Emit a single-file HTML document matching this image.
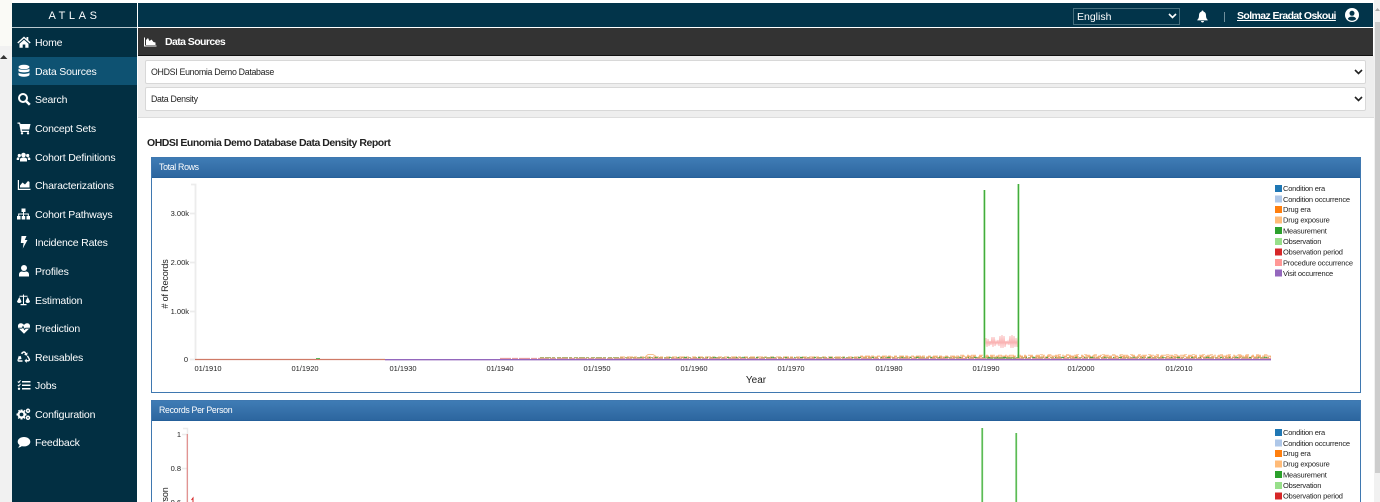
<!DOCTYPE html>
<html lang="en"><head><meta charset="utf-8"><title>ATLAS Data Sources</title>
<style>
html,body{margin:0;padding:0;width:1380px;height:502px;overflow:hidden;background:#fff;font-family:"Liberation Sans",sans-serif}
#root{position:relative;width:1380px;height:502px;overflow:hidden;background:#fff}
.a{position:absolute;white-space:nowrap}
#side{left:12px;top:3px;width:125px;height:499px;background:#022f42}
.it{position:absolute;left:12px;width:125px;height:28px;color:#fff;font-size:10.5px;line-height:28px}
.it span{position:absolute;left:23px;top:1px;letter-spacing:-.17px}
.it svg{position:absolute;left:5px;top:7px;width:14px;height:14px;fill:#fff}
.sel{position:absolute;left:145px;width:1221px;background:#fff;border:1px solid #d8d8d8;box-sizing:border-box;border-radius:2px;font-size:8.8px;color:#222;letter-spacing:-.3px}
.sel span{position:absolute;left:5px;top:6px}
.sel svg{position:absolute;right:2px;top:8px}
.panel{position:absolute;left:151px;width:1210px;box-sizing:border-box;border:1px solid #3f78b0;background:#fff}
.ph{height:20px;background:linear-gradient(#3f7cb5,#2d669f);border-bottom:1px solid #25609a;color:#fff;font-size:8.8px;line-height:19px;padding-left:7px;box-sizing:border-box;letter-spacing:-.33px}
</style></head><body><div id="root">
<div class="a" style="left:0;top:0;width:12px;height:46px;background:#fafaf6"></div>
<div class="a" style="left:0;top:46px;width:12px;height:456px;background:#f1f1f1"></div>
<svg class="a" style="left:0;top:54px" width="8" height="6"><path d="M0 5L3.7 1L7.4 5Z" fill="#333"/></svg>
<div class="a" id="side"></div>
<div class="a" style="left:12px;top:27px;width:125px;height:1px;background:#b9c8cf"></div>
<div class="a" style="left:137px;top:3px;width:1px;height:499px;background:#fff"></div>
<div class="a" style="left:12px;top:3px;width:125px;height:24px;color:#fff;text-align:center;font-size:11px;line-height:27px;letter-spacing:3.6px">ATLAS</div>

<div class="a" style="left:138px;top:3px;width:1235px;height:24px;background:#02344a"></div>
<div class="a" style="left:1073px;top:8px;width:107px;height:17px;box-sizing:border-box;border:1px solid #47707f;background:#02344a;color:#fff;font-size:10.5px;line-height:17px;padding-left:3px">English
<svg style="position:absolute;right:2px;top:4px" width="9" height="6"><path d="M1 1L4.5 4.5L8 1" stroke="#fff" stroke-width="1.6" fill="none"/></svg></div>
<svg class="a" style="left:1197px;top:10px" width="11" height="13" viewBox="0 0 11 13"><path d="M5.5 0.5C6.2 0.5 6.5 1 6.5 1.6C8.2 2 9 3.4 9 5.2C9 7.8 9.7 8.8 10.7 9.8V10.4H0.3V9.8C1.3 8.8 2 7.8 2 5.2C2 3.4 2.8 2 4.5 1.6C4.5 1 4.8 0.5 5.5 0.5ZM4 11H7C7 12 6.3 12.5 5.5 12.5S4 12 4 11Z" fill="#fff"/></svg>
<div class="a" style="left:1224px;top:12px;width:1px;height:10px;background:#6f8f9c"></div>
<div class="a" style="left:1237px;top:9px;color:#fff;font-size:10.5px;font-weight:bold;text-decoration:underline;line-height:15px;letter-spacing:-.6px">Solmaz Eradat Oskoui</div>
<svg class="a" style="left:1345px;top:8px" width="14" height="14" viewBox="0 0 14 14"><circle cx="7" cy="7" r="7" fill="#fff"/><circle cx="7" cy="5.3" r="2.5" fill="#02344a"/><path d="M2.8 11C3.5 9.2 5 8.6 7 8.6S10.5 9.2 11.2 11C10 12.2 8.5 12.7 7 12.7S4 12.2 2.8 11Z" fill="#02344a"/></svg>

<div class="a" style="left:138px;top:28px;width:1235px;height:28px;background:#333;border-bottom:1px solid #111;box-sizing:border-box"></div>
<svg class="a" style="left:144px;top:37px" width="13" height="10" viewBox="0 0 13 10"><path d="M1 0.5V8.5H12.5V9.5H0V0.5Z" fill="#fff"/><path d="M2 8V3L4 1L5.5 4L7.5 2.5L9.5 5L11.5 5.5V8Z" fill="#fff"/></svg>
<div class="a" style="left:165px;top:36px;color:#fff;font-size:10.5px;font-weight:bold;line-height:13px;letter-spacing:-.58px">Data Sources</div>

<div class="a" style="left:138px;top:56px;width:1236px;height:62px;background:#eee;border-bottom:1px solid #ddd;box-sizing:border-box"></div>
<div class="sel" style="top:60px;height:24px"><span>OHDSI Eunomia Demo Database</span><svg width="9" height="6"><path d="M1 1L4.5 4.5L8 1" stroke="#222" stroke-width="1.6" fill="none"/></svg></div>
<div class="sel" style="top:87px;height:24px"><span>Data Density</span><svg width="9" height="6"><path d="M1 1L4.5 4.5L8 1" stroke="#222" stroke-width="1.6" fill="none"/></svg></div>

<div class="a" style="left:147px;top:137px;font-size:10.5px;font-weight:bold;color:#222;line-height:13px;letter-spacing:-.47px">OHDSI Eunomia Demo Database Data Density Report</div>

<div class="panel" style="top:157px;height:236px"><div class="ph">Total Rows</div></div>
<div class="panel" style="top:400px;height:110px"><div class="ph">Records Per Person</div></div>

<svg class="a" style="left:0;top:0" width="1380" height="502" font-family="Liberation Sans" font-size="7.5" fill="#222">
<!-- chart 1 axes -->
<path d="M191 184.500H195.500V359.500M190 213.500H195M190 262.500H195M190 311.500H195M190 359.500H195" stroke="#ececec" stroke-width="1.800" fill="none"/>
<g text-anchor="end"><text x="189" y="216">3.00k</text><text x="189" y="265">2.00k</text><text x="189" y="314">1.00k</text><text x="188" y="362">0</text></g>
<g text-anchor="middle"><text x="208" y="371">01/1910</text><text x="305" y="371">01/1920</text><text x="403" y="371">01/1930</text><text x="500" y="371">01/1940</text><text x="597" y="371">01/1950</text><text x="694" y="371">01/1960</text><text x="791" y="371">01/1970</text><text x="889" y="371">01/1980</text><text x="986" y="371">01/1990</text><text x="1081" y="371">01/2000</text><text x="1179" y="371">01/2010</text></g>
<text x="756" y="383" font-size="10" text-anchor="middle">Year</text>
<text transform="translate(168,284) rotate(-90)" font-size="9" letter-spacing="-.15" text-anchor="middle"># of Records</text>
<!-- noise -->
<path d="M195 359.500H385" stroke="#cf7a66" stroke-width="1.200"/>
<path d="M500 358.500H1271" stroke="#e59aa0" stroke-width="1.200" stroke-dasharray="11 1 6 1"/>
<path d="M540 357.700H1271" stroke="#a8a860" stroke-width="1.100" stroke-dasharray="4 1 6 1 3 2"/>
<path d="M620 357H1271" stroke="#f6ad70" stroke-width="1.100" stroke-dasharray="5 2 6 1 3 3 4 2"/>
<path d="M860 356.200H1271" stroke="#f3ad72" stroke-width="1.100" stroke-dasharray="3 2 5 1 3 3"/>
<path d="M960 355.300H1271" stroke="#fcb985" stroke-width="1" stroke-dasharray="4 3 2 2 5 3"/>
<path d="M1040 354.500H1271" stroke="#f9cfa8" stroke-width="1" stroke-dasharray="3 5 3 7"/>
<path d="M640 357.300H1271" stroke="#3f9f3f" stroke-width="0.900" stroke-dasharray="2 7 1 5 3 11"/>
<path d="M645 357L648 354.500H653L657 357" stroke="#f7c08e" stroke-width="1" fill="none"/>
<path d="M316 358.500H320" stroke="#5cb85c" stroke-width="1"/>
<path d="M385 359.700H1271" stroke="#9467bd" stroke-width="1.300"/>
<!-- pink wave -->
<path d="M984 335L985 348L986 338L987 347L988 339L989 346L990 341L991 345L992 337L993 347L994 337L995 346L996 341L997 344L998 340L999 346L1000 336L1001 348L1002 335L1003 348L1004 336L1005 347L1006 341L1007 344L1008 341L1009 345L1010 336L1011 348L1012 335L1013 348L1014 336L1015 347L1016 338L1017 347L1018 336" stroke="#fab4b4" stroke-width="0.900" fill="none"/>
<path d="M984 342.500H1018" stroke="#fab4b4" stroke-width="2"/>
<!-- spikes -->
<path d="M984.500 190V358M1018.500 184V358" stroke="#98df8a" stroke-width="2"/>
<path d="M984.300 190V358M1018.300 184V358" stroke="#2ca02c" stroke-width="1"/>
<path d="M986 358H1016" stroke="#3aa83a" stroke-width="0.8"/>
<!-- legend 1 -->
<g letter-spacing="-.2">
<rect x="1275" y="185" width="7" height="7" fill="#1f77b4"/><text x="1283" y="191">Condition era</text>
<rect x="1275" y="195.500" width="7" height="7" fill="#aec7e8"/><text x="1283" y="202">Condition occurrence</text>
<rect x="1275" y="206" width="7" height="7" fill="#ff7f0e"/><text x="1283" y="212">Drug era</text>
<rect x="1275" y="216.500" width="7" height="7" fill="#ffbb78"/><text x="1283" y="222.500">Drug exposure</text>
<rect x="1275" y="227" width="7" height="7" fill="#2ca02c"/><text x="1283" y="233.500">Measurement</text>
<rect x="1275" y="238" width="7" height="7" fill="#98df8a"/><text x="1283" y="244">Observation</text>
<rect x="1275" y="248.500" width="7" height="7" fill="#d62728"/><text x="1283" y="254.500">Observation period</text>
<rect x="1275" y="259" width="7" height="7" fill="#ff9896"/><text x="1283" y="265.500">Procedure occurrence</text>
<rect x="1275" y="269.500" width="7" height="7" fill="#9467bd"/><text x="1283" y="276">Visit occurrence</text>
</g>
<!-- chart 2 -->
<path d="M183 428.500H187.500V502M182 434.500H187M182 468.500H187" stroke="#ececec" stroke-width="1.400" fill="none"/>
<path d="M187.300 434V502" stroke="#e08a88" stroke-width="1.200"/>
<path d="M191.500 500L193 498V502" stroke="#d62728" stroke-width="1" fill="none"/>
<g text-anchor="end"><text x="181" y="437">1</text><text x="181" y="471">0.8</text><text x="181" y="505">0.6</text></g>
<text transform="translate(168,515) rotate(-90)" font-size="9" letter-spacing="-.15">Person</text>
<path d="M982.300 428V502M1016.300 433V502" stroke="#98df8a" stroke-width="1.800"/>
<path d="M982.100 428V502M1016.100 433V502" stroke="#2ca02c" stroke-width="0.9"/>
<g letter-spacing="-.2">
<rect x="1275" y="429" width="7" height="7" fill="#1f77b4"/><text x="1283" y="435">Condition era</text>
<rect x="1275" y="439.500" width="7" height="7" fill="#aec7e8"/><text x="1283" y="446">Condition occurrence</text>
<rect x="1275" y="450" width="7" height="7" fill="#ff7f0e"/><text x="1283" y="456">Drug era</text>
<rect x="1275" y="460.500" width="7" height="7" fill="#ffbb78"/><text x="1283" y="466.500">Drug exposure</text>
<rect x="1275" y="471" width="7" height="7" fill="#2ca02c"/><text x="1283" y="477.500">Measurement</text>
<rect x="1275" y="482" width="7" height="7" fill="#98df8a"/><text x="1283" y="488">Observation</text>
<rect x="1275" y="492.500" width="7" height="7" fill="#d62728"/><text x="1283" y="498.500">Observation period</text>
</g>
</svg>

<!-- right scrollbar -->
<div class="a" style="left:1374px;top:0;width:6px;height:502px;background:#f1f1f1"></div>
<div class="a" style="left:1375px;top:22px;width:5px;height:451px;background:#cdcdcd"></div>
<svg class="a" style="left:1375px;top:7px" width="5" height="5"><path d="M0 4L2.5 1L5 4Z" fill="#aaa"/></svg>

<!-- nav -->
<div class="it" style="top:28px"><svg viewBox="0 0 14 14"><path d="M7 1.500L0.300 7.500L1.200 8.500L7 3.400L12.800 8.500L13.700 7.500L11.300 5.300V2H9.500V3.700Z"/><path d="M2.500 8.800L7 4.800L11.500 8.800V12.800H8.300V9.500H5.700V12.800H2.500Z"/></svg><span>Home</span></div>
<div class="it" style="top:57px;background:#0e5272"><svg viewBox="0 0 14 14"><ellipse cx="7" cy="3" rx="5.500" ry="2.300"/><path d="M1.500 4.500C2.500 6.300 11.500 6.300 12.500 4.500V7C11.500 8.800 2.500 8.800 1.500 7Z"/><path d="M1.500 8.500C2.500 10.300 11.500 10.300 12.500 8.500V11C11.500 13.300 2.500 13.300 1.500 11Z"/></svg><span>Data Sources</span></div>
<div class="it" style="top:85px"><svg viewBox="0 0 14 14"><circle cx="6" cy="6" r="4" fill="none" stroke="#fff" stroke-width="2"/><path d="M9 9L12.800 12.800" stroke="#fff" stroke-width="2.500"/></svg><span>Search</span></div>
<div class="it" style="top:114px"><svg viewBox="0 0 14 14"><path d="M0.500 1.500H3L3.500 3H13.500L12.300 8.500H4.700L5 9.700H12V11H3.800L2.200 2.800H0.500Z"/><circle cx="5" cy="12.300" r="1.200"/><circle cx="11" cy="12.300" r="1.200"/></svg><span>Concept Sets</span></div>
<div class="it" style="top:143px"><svg viewBox="0 0 14 14" style="left:4px;width:15px"><circle cx="7" cy="5" r="2.300"/><circle cx="2.800" cy="5.500" r="1.600"/><circle cx="11.200" cy="5.500" r="1.600"/><path d="M3.500 11.500V9.500C3.500 8 5 7.500 7 7.500S10.500 8 10.500 9.500V11.500Z"/><path d="M0.200 10V8.500C0.200 7.500 1.500 7.300 3 7.500C2.700 8.300 2.600 9 2.600 10ZM13.800 10V8.500C13.800 7.500 12.500 7.300 11 7.500C11.300 8.300 11.400 9 11.400 10Z"/></svg><span>Cohort Definitions</span></div>
<div class="it" style="top:171px"><svg viewBox="0 0 14 14"><path d="M0.800 2V12H13.500V10.800H2V2Z"/><path d="M3 9.500V7.500L5.500 4.500L8 6.500L11 3L12.500 4V9.500Z"/></svg><span>Characterizations</span></div>
<div class="it" style="top:200px"><svg viewBox="0 0 14 14" style="left:4px;width:15px"><rect x="5" y="1.500" width="4" height="3.500"/><rect x="0.500" y="9" width="3.500" height="3.500"/><rect x="5.200" y="9" width="3.500" height="3.500"/><rect x="10" y="9" width="3.500" height="3.500"/><path d="M6.500 5H7.500V6.500H12.300V9H11.300V7.500H7.500V9H6.500V7.500H2.700V9H1.700V6.500H6.500Z"/></svg><span>Cohort Pathways</span></div>
<div class="it" style="top:228px"><svg viewBox="0 0 14 14"><path d="M4.500 1H9.500L7.800 5H10.500L5.800 13.500L6.600 8H3.800Z"/></svg><span>Incidence Rates</span></div>
<div class="it" style="top:257px"><svg viewBox="0 0 14 14"><circle cx="7" cy="4" r="3"/><path d="M2 12.500V10.500C2 8.500 3.500 7.500 5 7.500C6 8 8 8 9 7.500C10.500 7.500 12 8.500 12 10.500V12.500Z"/></svg><span>Profiles</span></div>
<div class="it" style="top:286px"><svg viewBox="0 0 14 14" style="left:4px;width:15px"><path d="M6.500 1.500H7.500V2.800L11 2.800V3.800H7.500V11H10V12.300H4V11H6.500V3.800H3V2.800H6.500Z"/><path d="M0.500 8.500L2.800 4L5 8.500C4.800 10.500 0.800 10.500 0.500 8.500ZM9 8.500L11.200 4L13.500 8.500C13.200 10.500 9.200 10.500 9 8.500Z"/></svg><span>Estimation</span></div>
<div class="it" style="top:314px"><svg viewBox="0 0 14 14"><path d="M7 12.800L2 7.800C0 5.500 1 2.300 3.800 2.300C5.200 2.300 6.200 3 7 4C7.800 3 8.800 2.300 10.200 2.300C13 2.300 14 5.500 12 7.800Z"/><path d="M2 7.200H5L6 5.500L7.500 8.500L8.700 7.200H12" stroke="#022f42" stroke-width="0.9" fill="none"/></svg><span>Prediction</span></div>
<div class="it" style="top:343px"><svg viewBox="0 0 14 14"><path d="M7 1.200C8 1.200 8.800 2 9.500 3.200L10.700 2.500L10 5.700L7 4.800L8.200 4.100C7.800 3.300 7.400 2.700 6.800 2.700C6.200 2.700 5.700 3.500 5.300 4.200L3.800 3.300C4.800 2 5.800 1.200 7 1.200ZM11 5.500L13 9C13.500 10.300 12.500 11.500 11.200 11.500H9.700V13L7.500 10.700L9.700 8.500V10H11C11.600 10 11.800 9.500 11.500 9L9.800 6.200ZM1.800 5.800L3 6.500L3.800 5.800L4.500 9L1.300 9.700L2 8.500L1.500 9.500C1.300 10 1.600 10.300 2.200 10.300H5.500V11.800H2C0.800 11.800 0 10.500 0.700 9.200Z"/></svg><span>Reusables</span></div>
<div class="it" style="top:371px"><svg viewBox="0 0 14 14"><path d="M5 3H13.500V4.500H5ZM5 6.500H13.500V8H5ZM5 10H13.500V11.500H5Z"/><path d="M0.800 3.500L1.800 4.500L3.500 2.300M0.800 7L1.800 8L3.500 5.800" stroke="#fff" stroke-width="1" fill="none"/><circle cx="2" cy="10.800" r="1.200"/></svg><span>Jobs</span></div>
<div class="it" style="top:400px"><svg viewBox="0 0 14 14" style="left:4px;width:15px"><circle cx="5" cy="7.500" r="3" fill="none" stroke="#fff" stroke-width="2.200"/><path d="M4 2.500H6V4.500H4ZM4 10.500H6V12.500H4ZM0 6.500H2V8.500H0ZM8 6.500H10V8.500H8ZM1.500 3.500L3 2.800L3.800 4.500L2.500 5.200ZM6.800 10.500L8 9.500L9 11L7.800 12ZM1.200 11L2.400 9.800L3.400 10.800L2.300 12ZM7 3.800L8.300 2.800L9 4L8 5Z"/><circle cx="11.500" cy="3.800" r="1.500" fill="none" stroke="#fff" stroke-width="1.500"/><circle cx="11.500" cy="10.800" r="1.500" fill="none" stroke="#fff" stroke-width="1.500"/></svg><span>Configuration</span></div>
<div class="it" style="top:428px"><svg viewBox="0 0 14 14"><path d="M7 2C10.500 2 13.300 4 13.300 6.700S10.500 11.400 7 11.400C6.200 11.400 5.500 11.300 4.800 11.100C3.800 12 2.500 12.500 1 12.600C2 11.700 2.500 10.800 2.600 10C1.400 9.200 0.700 8 0.700 6.700C0.700 4 3.500 2 7 2Z"/></svg><span>Feedback</span></div>
</div></body></html>
